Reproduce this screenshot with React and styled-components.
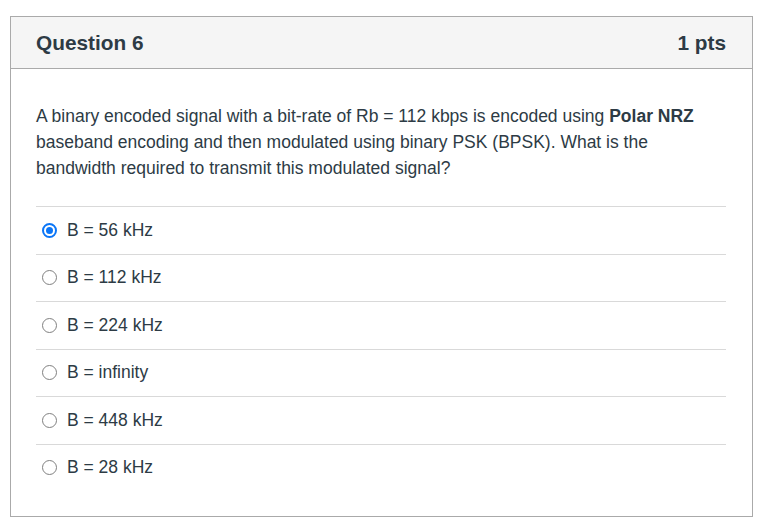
import React from "react";
import styled, { createGlobalStyle } from "styled-components";

const Global = createGlobalStyle`
  html, body { margin: 0; padding: 0; background: #fff; }
  body { font-family: "Liberation Sans", Arial, sans-serif; color: #2d3b45; }
`;

const Page = styled.div`
  padding: 16px 9px 15px 10px;
`;

const Card = styled.div`
  border: 1px solid #aaaaaa;
  width: 741px;
  box-sizing: content-box;
`;

const Header = styled.div`
  display: flex;
  justify-content: space-between;
  align-items: center;
  height: 51px;
  padding: 0 26px 0 25px;
  background: #f5f5f5;
  border-bottom: 1px solid #aaaaaa;
`;

const Title = styled.h2`
  margin: 0;
  font-size: 20.8px;
  font-weight: 700;
  color: #2d3b45;
`;

const Points = styled.span`
  font-size: 20.8px;
  font-weight: 700;
  color: #2d3b45;
`;

const Body = styled.div`
  padding: 34px 26px 25px 25px;
`;

const Prompt = styled.p`
  margin: 0 0 25px;
  font-size: 17.5px;
  line-height: 26px;
`;

const Answers = styled.div`
  display: flex;
  flex-direction: column;
`;

const Answer = styled.label`
  display: flex;
  align-items: center;
  gap: 10px;
  height: 46.5px;
  padding-left: 6px;
  border-top: 1px solid #d9d9d9;
  font-size: 17.5px;
`;

const Radio = styled.span`
  width: 15px;
  height: 15px;
  box-sizing: border-box;
  border-radius: 50%;
  border: ${(p) => (p.$checked ? "2px solid #0b76f7" : "1.5px solid #808080")};
  display: flex;
  align-items: center;
  justify-content: center;
  flex-shrink: 0;
  background: #fff;
  &::after {
    content: "";
    display: ${(p) => (p.$checked ? "block" : "none")};
    width: 7px;
    height: 7px;
    border-radius: 50%;
    background: #0b76f7;
  }
`;

const options = [
  "B = 56 kHz",
  "B = 112 kHz",
  "B = 224 kHz",
  "B = infinity",
  "B = 448 kHz",
  "B = 28 kHz",
];

export default function App() {
  return (
    <>
      <Global />
      <Page>
        <Card>
          <Header>
            <Title>Question 6</Title>
            <Points>1 pts</Points>
          </Header>
          <Body>
            <Prompt>
              A binary encoded signal with a bit-rate of Rb = 112 kbps is encoded using{" "}
              <strong>Polar NRZ</strong> baseband encoding and then modulated using binary PSK
              (BPSK). What is the bandwidth required to transmit this modulated signal?
            </Prompt>
            <Answers>
              {options.map((o, i) => (
                <Answer key={o}>
                  <Radio $checked={i === 0} />
                  <span>{o}</span>
                </Answer>
              ))}
            </Answers>
          </Body>
        </Card>
      </Page>
    </>
  );
}
